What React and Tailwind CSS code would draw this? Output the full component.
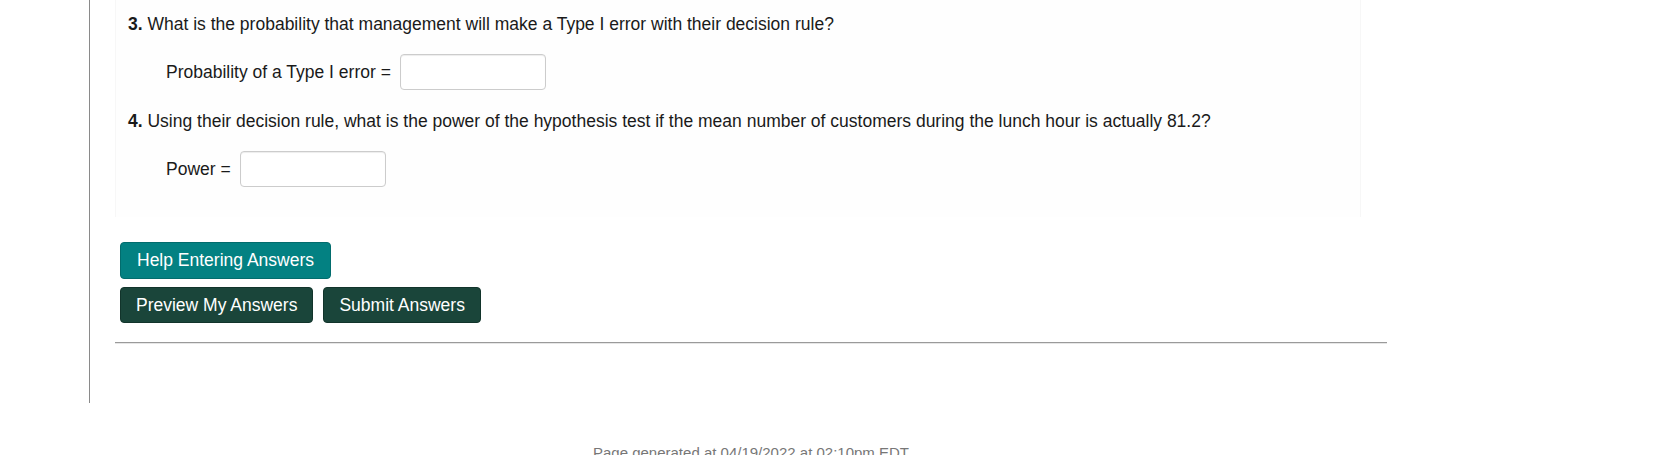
import React from 'react';

const inputCls =
  'w-[146px] h-[36px] border border-[#cccccc] rounded-[4px] bg-white shadow-[inset_0_1px_1px_rgba(0,0,0,0.075)]';

const darkBtn = 'h-[36px] px-[15px] rounded-[4px] bg-[#1a453a] border border-[#12342b] text-white';

export default function App() {
  return (
    <div className="w-[1674px] h-[455px] overflow-hidden bg-white text-[#1a1a1a] font-['Liberation_Sans',Arial,sans-serif] text-[17.5px]">
      <div className="ml-[89px] w-[1300px] h-[403px] border-l border-[#8a8a8a] pl-[25px]">
        <div className="w-[1272px]">
          {/* problem body */}
          <div className="w-[1246px] h-[217px] bg-[#fefefe] border-x border-[#f7f7f7] pl-[12px] pt-[12px]">
            <p className="leading-[24px]">
              <b>3.</b> What is the probability that management will make a Type I error with their decision rule?
            </p>
            <div className="mt-[18px] pl-[38px] flex items-center gap-[9px]">
              <span>Probability of a Type I error =</span>
              <input className={inputCls} />
            </div>
            <p className="mt-[19px] leading-[24px]">
              <b>4.</b> Using their decision rule, what is the power of the hypothesis test if the mean number of customers during the lunch hour is actually 81.2?
            </p>
            <div className="mt-[18px] pl-[38px] flex items-center gap-[9px]">
              <span>Power =</span>
              <input className={inputCls} />
            </div>
          </div>

          {/* buttons */}
          <div className="mt-[25px] pl-[5px]">
            <button className="h-[37px] px-[16px] rounded-[4px] bg-[#038182] border border-[#026c6d] text-white">
              Help Entering Answers
            </button>
            <div className="mt-[8px] flex gap-[10px]">
              <button className={darkBtn}>Preview My Answers</button>
              <button className={darkBtn}>Submit Answers</button>
            </div>
          </div>

          <hr className="mt-[19px] border-0 border-t border-[#9a9a9a] border-b-[1px] border-b-[#e6e6e6]" />
        </div>
      </div>

      <div className="w-[1272px] ml-[115px] mt-[39px] text-center text-[15px] text-[#777]">
        Page generated at 04/19/2022 at 02:10pm EDT
      </div>
    </div>
  );
}
